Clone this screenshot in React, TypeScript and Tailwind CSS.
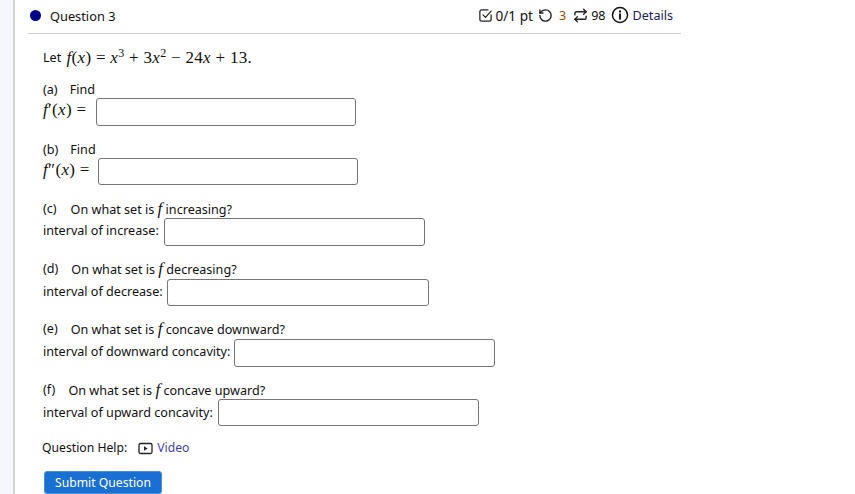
function M({ children }: { children: React.ReactNode }) {
  return <span className="font-['Liberation_Serif',serif] text-[17px] font-medium tracking-[0.3px] text-[#111]">{children}</span>;
}
function I({ children }: { children: React.ReactNode }) {
  return <i className="font-['Liberation_Serif',serif] text-[17px] font-medium">{children}</i>;
}
function Box({ w = "w-[260px]", h = "h-[28px]" }: { w?: string; h?: string }) {
  return <div className={`${w} ${h} shrink-0 rounded-[3px] border border-[#767676] bg-white`} />;
}
function Part({ label, children, rowLabel, box, top, gap, h, boxTop = "", pad = "pb-[3px]", rowGap = "gap-[4px]" }: { label: string; children: React.ReactNode; rowLabel: React.ReactNode; box: string; top: string; gap: string; h: string; boxTop?: string; pad?: string; rowGap?: string }) {
  return (
    <div className={top}>
      <div className={`flex h-[18px] items-center ${gap} whitespace-pre`}><span>{label}</span><span>{children}</span></div>
      <div className={`flex items-center ${rowGap} ${boxTop}`}>
        <div className={`whitespace-pre ${pad}`}>{rowLabel}</div>
        <Box w={box} h={h} />
      </div>
    </div>
  );
}
export default function App() {
  return (
    <div className="flex h-[494px] w-[855px] overflow-hidden bg-white font-['Noto_Sans',sans-serif] text-[12.6px] leading-[18px] text-[#111]">
      <div className="w-[15px] shrink-0 border-r-[2px] border-[#d4d4d8] bg-[#f6f7fd]" />
      <div className="ml-[13px] w-[653px]">
        <div className="flex h-[34px] items-center border-b border-[#cfcfcf] pb-[2px]">
          <span className="ml-[2px] h-[11px] w-[11px] rounded-full bg-[#00008b]" />
          <span className="ml-[9px] text-[12.8px]">Question 3</span>
          <div className="ml-auto mr-[8px] flex items-center">
            <svg width="15" height="15" viewBox="0 0 24 24" fill="none" stroke="#222" strokeWidth="2" strokeLinecap="round" strokeLinejoin="round"><path d="M21 11v7a3 3 0 0 1-3 3H6a3 3 0 0 1-3-3V6a3 3 0 0 1 3-3h10" /><path d="M8 11l4 4 9-10" /></svg>
            <span className="ml-[2px] text-[13.6px]">0/1 pt</span>
            <svg className="ml-[5px]" width="15" height="15" viewBox="0 0 24 24" fill="none" stroke="#222" strokeWidth="2.2" strokeLinecap="round" strokeLinejoin="round"><path d="M3 12a9 9 0 1 0 9-9 9.75 9.75 0 0 0-6.74 2.74L3 8" /><path d="M3 3v5h5" /></svg>
            <span className="ml-[6px] text-[#a04a00]">3</span>
            <svg className="ml-[7px]" width="15" height="15" viewBox="0 0 24 24" fill="none" stroke="#222" strokeWidth="2.2" strokeLinecap="round" strokeLinejoin="round"><path d="M17 2l4 4-4 4" /><path d="M3 11V9a3 3 0 0 1 3-3h15" /><path d="M7 22l-4-4 4-4" /><path d="M21 13v2a3 3 0 0 1-3 3H3" /></svg>
            <span className="ml-[3px]">98</span>
            <svg className="mb-[2px] ml-[5px]" width="18" height="18" viewBox="0 0 24 24" fill="none" stroke="#111" strokeWidth="2" strokeLinecap="round"><circle cx="12" cy="12" r="10" /><path d="M12 11v6" strokeWidth="2.6" /><path d="M12 7v.5" strokeWidth="2.8" /></svg>
            <span className="ml-[4px] text-[#1c1a5e]">Details</span>
          </div>
        </div>
        <div className="ml-[15px]">
          <div className="mt-[14px] flex h-[20px] items-center whitespace-pre">
            <span className="mr-[2px]">Let </span><M><I>f</I>(<I>x</I>) = <I>x</I><sup className="text-[12px]">3</sup> + 3<I>x</I><sup className="text-[12px]">2</sup> − 24<I>x</I> + 13.</M>
          </div>
          <Part top="mt-[13px]" gap="gap-[12px]" label="(a)" box="w-[260px]" h="h-[28px]" boxTop="-mt-[1px]" rowLabel={<span className="mr-[6px]"><M><I>f</I>′(<I>x</I>) =</M></span>}>Find</Part>
          <Part top="mt-[15px]" gap="gap-[12px]" label="(b)" box="w-[260px]" h="h-[27px]" boxTop="-mt-[1px]" rowLabel={<span className="mr-[4px]"><M><I>f</I>″(<I>x</I>) =</M></span>}>Find</Part>
          <Part top="mt-[15px]" gap="gap-[14px]" label="(c)" box="w-[261px]" h="h-[28px]" rowGap="gap-[5px]" rowLabel="interval of increase:"><>On what set is <I>f</I> increasing?</></Part>
          <Part top="mt-[14px]" gap="gap-[13px]" label="(d)" box="w-[262px]" h="h-[27px]" boxTop="mt-[1px]" pad="pb-[1px]" rowLabel="interval of decrease:"><>On what set is <I>f</I> decreasing?</></Part>
          <Part top="mt-[14px]" gap="gap-[13px]" label="(e)" box="w-[261px]" h="h-[28px]" boxTop="mt-[1px]" rowLabel="interval of downward concavity:"><>On what set is <I>f</I> concave downward?</></Part>
          <Part top="mt-[14px]" gap="gap-[13px]" label="(f)" box="w-[261px]" h="h-[27px]" pad="pb-[0px]" rowGap="gap-[5px]" rowLabel="interval of upward concavity:"><>On what set is <I>f</I> concave upward?</></Part>
          <div className="ml-[-1px] mt-[13px] flex items-center text-[12.2px]">
            <span>Question Help:</span>
            <svg className="ml-[11px]" width="15" height="13" viewBox="0 0 15 13" fill="none" stroke="#222" strokeWidth="1.3"><rect x="1" y="1.5" width="13" height="10" rx="1.5" /><path d="M6 4.2v4.6l3.6-2.3z" fill="#222" stroke="none" /></svg>
            <span className="ml-[4px] text-[#3f3fb5]">Video</span>
          </div>
          <button className="ml-[1px] mt-[14px] block h-[23px] w-[118px] rounded-[3px] border border-[#4a90d9] bg-[#1a6fd4] text-center text-[12.2px] text-white">Submit Question</button>
        </div>
      </div>
    </div>
  );
}
